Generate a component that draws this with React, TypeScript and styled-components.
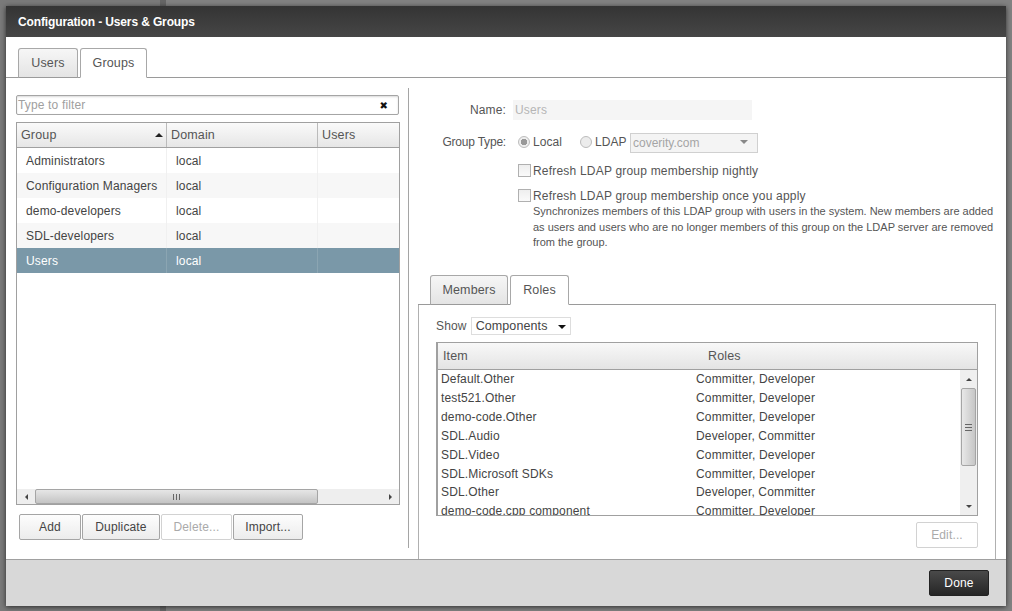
import React from "react";
import styled, { createGlobalStyle, css } from "styled-components";

const Global = createGlobalStyle`
  html, body { margin: 0; padding: 0; height: 100%; overflow: hidden; }
  body {
    font-family: "Liberation Sans", Arial, sans-serif;
    font-size: 12px;
    letter-spacing: 0.15px;
    color: #444;
    background: linear-gradient(90deg, #7a7a7a 0 160px, #666 160px 166px, #828282 166px);
  }
  #root { height: 100%; }
`;

const Stage = styled.div`
  width: 1012px;
  height: 611px;
  padding: 6px;
  box-sizing: border-box;
`;
const Dialog = styled.div`
  width: 1000px;
  height: 600px;
  display: flex;
  flex-direction: column;
  background: #fff;
  box-shadow: 0 1px 5px rgba(0, 0, 0, 0.65);
`;
const Header = styled.div`
  height: 31px;
  flex: none;
  display: flex;
  align-items: center;
  padding-left: 12px;
  background: linear-gradient(#343434, #464646);
  color: #fff;
  font-weight: bold;
  font-size: 12px;
  letter-spacing: -0.13px;
`;
const TabBar = styled.div<{ $pad: number }>`
  display: flex;
  align-items: flex-end;
  gap: 2px;
  height: 30px;
  flex: none;
  padding-left: ${(p) => p.$pad}px;
  border-bottom: 1px solid #9a9a9a;
  box-sizing: border-box;
`;
const Tab = styled.div<{ $active?: boolean; $w: number }>`
  width: ${(p) => p.$w}px;
  height: 30px;
  box-sizing: border-box;
  display: flex;
  align-items: center;
  justify-content: center;
  font-size: 12.5px;
  color: #555;
  border: 1px solid #a8a8a8;
  border-radius: 3px 3px 0 0;
  margin-bottom: -1px;
  background: ${(p) => (p.$active ? "#fff" : "linear-gradient(#f6f6f6, #e4e4e4)")};
  border-bottom: ${(p) => (p.$active ? "1px solid #fff" : "1px solid #9a9a9a")};
`;
const TopTabs = styled.div`
  padding-top: 11px;
  flex: none;
`;
const Body = styled.div`
  flex: 1;
  min-height: 0;
  display: flex;
  padding-top: 10px;
`;
const LeftPanel = styled.div`
  width: 403px;
  height: 460px;
  flex: none;
  box-sizing: border-box;
  border-right: 1px solid #a5a5a5;
  padding: 7px 0 0 10px;
`;
const Filter = styled.div`
  width: 383px;
  height: 20px;
  box-sizing: border-box;
  border: 1px solid #a5a5a5;
  border-radius: 2px;
  box-shadow: inset 0 1px 2px rgba(0, 0, 0, 0.15);
  display: flex;
  align-items: center;
  justify-content: space-between;
  padding: 0 10px 0 1px;
  color: #a0a0a0;
`;
const ClearX = styled.span`
  color: #111;
  font-size: 10px;
  font-weight: bold;
  font-family: "DejaVu Sans", sans-serif;
`;
const GroupTable = styled.div`
  width: 384px;
  height: 383px;
  margin-top: 7px;
  box-sizing: border-box;
  border: 1px solid #a0a0a0;
  display: flex;
  flex-direction: column;
`;
const groupCols = css`
  display: grid;
  grid-template-columns: 150px 151px 1fr;
`;
const GroupHead = styled.div`
  ${groupCols}
  height: 25px;
  flex: none;
  box-sizing: border-box;
  background: linear-gradient(#fafafa, #e6e6e6);
  border-bottom: 1px solid #a0a0a0;
`;
const HeadCell = styled.div`
  display: flex;
  align-items: center;
  justify-content: space-between;
  padding: 0 4px;
  font-size: 12.5px;
  color: #555;
  border-right: 1px solid #bbb;
  &:last-child { border-right: 0; }
`;
const SortUp = styled.span`
  width: 0;
  height: 0;
  border-left: 4px solid transparent;
  border-right: 4px solid transparent;
  border-bottom: 4px solid #222;
  margin-right: -1px;
`;
const GroupRows = styled.div`
  flex: 1;
  min-height: 0;
`;
const GroupRow = styled.div<{ $alt?: boolean; $sel?: boolean }>`
  ${groupCols}
  height: 25px;
  background: ${(p) => (p.$sel ? "#7a98a8" : p.$alt ? "#f7f7f7" : "#fff")};
  color: ${(p) => (p.$sel ? "#fff" : "#444")};
`;
const GroupCell = styled.div<{ $sel?: boolean }>`
  display: flex;
  align-items: center;
  padding-left: 9px;
  border-right: 1px solid ${(p) => (p.$sel ? "#8ba5b2" : "#f0f0f0")};
  &:last-child { border-right: 0; }
`;
const HScroll = styled.div`
  height: 15px;
  flex: none;
  display: flex;
  align-items: center;
  background: #eee;
`;
const ArrowBox = styled.div`
  width: 18px;
  height: 15px;
  flex: none;
  display: flex;
  align-items: center;
  justify-content: center;
`;
const Tri = styled.span<{ $dir: "l" | "r" | "u" | "d" }>`
  width: 0;
  height: 0;
  ${(p) =>
    p.$dir === "l"
      ? "border-top:3.5px solid transparent;border-bottom:3.5px solid transparent;border-right:3px solid #444;"
      : p.$dir === "r"
      ? "border-top:3.5px solid transparent;border-bottom:3.5px solid transparent;border-left:3px solid #444;"
      : p.$dir === "u"
      ? "border-left:3.5px solid transparent;border-right:3.5px solid transparent;border-bottom:3px solid #444;"
      : "border-left:3.5px solid transparent;border-right:3.5px solid transparent;border-top:3px solid #444;"}
`;
const HThumb = styled.div`
  width: 283px;
  height: 15px;
  box-sizing: border-box;
  border: 1px solid #a5a5a5;
  border-radius: 2px;
  background: linear-gradient(#e6e6e6, #c4c4c4);
  display: flex;
  align-items: center;
  justify-content: center;
`;
const GripH = styled.span`
  width: 7px;
  height: 6px;
  background: repeating-linear-gradient(90deg, #666 0 1px, transparent 1px 3px);
`;
const ButtonRow = styled.div`
  display: flex;
  gap: 1px;
  margin: 9px 0 0 3px;
`;
const Btn = styled.div<{ $w: number; $disabled?: boolean }>`
  width: ${(p) => p.$w}px;
  height: 26px;
  box-sizing: border-box;
  display: flex;
  align-items: center;
  justify-content: center;
  border: 1px solid ${(p) => (p.$disabled ? "#d2d2d2" : "#a5a5a5")};
  border-radius: 2px;
  background: ${(p) => (p.$disabled ? "#fff" : "linear-gradient(#fdfdfd, #ececec)")};
  color: ${(p) => (p.$disabled ? "#aaa" : "#444")};
`;
const RightPanel = styled.div`
  flex: 1;
  min-width: 0;
  display: flex;
  flex-direction: column;
`;
const Form = styled.div`
  height: 187px;
  flex: none;
  padding-top: 12px;
  box-sizing: border-box;
`;
const FormRow = styled.div<{ $h: number; $top?: number }>`
  display: flex;
  align-items: center;
  height: ${(p) => p.$h}px;
  margin-top: ${(p) => p.$top ?? 0}px;
`;
const Label = styled.div<{ $lift?: number; $track?: number }>`
  width: 97px;
  flex: none;
  text-align: right;
  margin-right: 7px;
  margin-bottom: ${(p) => p.$lift ?? 0}px;
  letter-spacing: ${(p) => p.$track ?? 0.15}px;
  color: #555;
  white-space: nowrap;
`;
const NameInput = styled.div`
  width: 239px;
  height: 20px;
  background: #f5f5f5;
  color: #b5b5b5;
  padding-left: 2px;
  box-sizing: border-box;
  line-height: 20px;
`;
const Radio = styled.span<{ $on?: boolean; $left: number }>`
  width: 12px;
  height: 12px;
  box-sizing: border-box;
  border-radius: 50%;
  border: 1px solid #bcbcbc;
  background: ${(p) => (p.$on ? "radial-gradient(circle, #999 0 3px, #eee 3.5px)" : "#ececec")};
  margin: 0 3px 2px ${(p) => p.$left}px;
  flex: none;
`;
const RadioText = styled.span<{ $w: number }>`
  width: ${(p) => p.$w}px;
  color: #555;
  flex: none;
  margin-bottom: 2px;
  letter-spacing: 0.05px;
`;
const LdapSelect = styled.div`
  width: 128px;
  height: 20px;
  box-sizing: border-box;
  background: #f4f4f4;
  border: 1px solid #d0d0d0;
  color: #a5a5a5;
  display: flex;
  align-items: center;
  justify-content: space-between;
  padding: 0 9px 0 2px;
  letter-spacing: 0;
`;
const GrayCaret = styled.span`
  width: 0;
  height: 0;
  border-left: 4px solid transparent;
  border-right: 4px solid transparent;
  border-top: 4px solid #888;
  margin-bottom: 3px;
`;
const CheckRow = styled.div<{ $top?: number }>`
  display: flex;
  align-items: center;
  height: 25px;
  margin-top: ${(p) => p.$top ?? 0}px;
  padding-left: 109px;
  color: #555;
  letter-spacing: 0.2px;
`;
const Check = styled.span`
  width: 13px;
  height: 13px;
  box-sizing: border-box;
  border: 1px solid #b0b0b0;
  background: linear-gradient(#eee, #fafafa);
  margin-right: 2px;
  flex: none;
`;
const Help = styled.div`
  margin: -4px 0 0 124px;
  width: 463px;
  font-size: 11px;
  letter-spacing: 0;
  line-height: 15.5px;
  color: #555;
`;
const SubTabs = styled.div`
  flex: none;
  width: 578px;
  margin-left: 9px;
`;
const SubPanel = styled.div`
  width: 578px;
  margin-left: 9px;
  box-sizing: border-box;
  flex: 1;
  min-height: 0;
  border-left: 1px solid #b0b0b0;
  border-right: 1px solid #b0b0b0;
  padding: 12px 0 0 17px;
`;
const ShowRow = styled.div`
  display: flex;
  align-items: center;
  gap: 4px;
  height: 18px;
  color: #555;
`;
const ShowSelect = styled.div`
  width: 100px;
  height: 18px;
  box-sizing: border-box;
  border: 1px solid #ddd;
  display: flex;
  align-items: center;
  justify-content: space-between;
  padding: 0 4px;
  font-size: 12.5px;
  letter-spacing: 0.1px;
  color: #444;
`;
const BlackCaret = styled.span`
  width: 0;
  height: 0;
  border-left: 4px solid transparent;
  border-right: 4px solid transparent;
  border-top: 4px solid #111;
  margin-top: 2px;
`;
const RolesTable = styled.div`
  width: 542px;
  height: 174px;
  margin-top: 7px;
  box-sizing: border-box;
  border: 1px solid #a0a0a0;
  border-left-width: 2px;
  display: flex;
  flex-direction: column;
  overflow: hidden;
`;
const RolesHead = styled.div`
  height: 27px;
  flex: none;
  box-sizing: border-box;
  display: grid;
  grid-template-columns: 265px 1fr;
  align-items: center;
  padding-left: 5px;
  background: linear-gradient(#f8f8f8, #e4e4e4);
  border-bottom: 1px solid #a0a0a0;
  color: #555;
  font-size: 12.5px;
`;
const RolesBody = styled.div`
  flex: 1;
  min-height: 0;
  display: flex;
`;
const RolesList = styled.div`
  flex: 1;
  min-width: 0;
  overflow: hidden;
`;
const RoleRow = styled.div`
  display: grid;
  grid-template-columns: 255px 1fr;
  height: 18.85px;
  align-items: center;
  padding-left: 3px;
  color: #444;
`;
const VScroll = styled.div`
  width: 17px;
  flex: none;
  background: #efefef;
  display: flex;
  flex-direction: column;
  align-items: center;
`;
const VArrow = styled.div`
  width: 16px;
  height: 18px;
  flex: none;
  display: flex;
  align-items: center;
  justify-content: center;
`;
const VThumb = styled.div`
  width: 15px;
  height: 78px;
  flex: none;
  box-sizing: border-box;
  border: 1px solid #a5a5a5;
  border-radius: 2px;
  background: linear-gradient(90deg, #e8e8e8, #c6c6c6);
  display: flex;
  align-items: center;
  justify-content: center;
`;
const GripV = styled.span`
  width: 7px;
  height: 7px;
  background: repeating-linear-gradient(180deg, #666 0 1px, transparent 1px 3px);
`;
const Spacer = styled.div`
  flex: 1;
`;
const EditRow = styled.div`
  width: 542px;
  display: flex;
  justify-content: flex-end;
  margin-top: 6px;
`;
const Footer = styled.div`
  height: 47px;
  flex: none;
  box-sizing: border-box;
  background: #d8d8d8;
  border-top: 1px solid #a0a0a0;
  display: flex;
  align-items: flex-start;
  justify-content: flex-end;
  padding: 10px 17px 0 0;
`;
const Done = styled.div`
  width: 60px;
  height: 26px;
  box-sizing: border-box;
  border: 1px solid #222;
  border-radius: 2px;
  background: linear-gradient(#4a4a4a, #262626);
  color: #fff;
  display: flex;
  align-items: center;
  justify-content: center;
`;

const groups = [
  "Administrators",
  "Configuration Managers",
  "demo-developers",
  "SDL-developers",
  "Users",
];
const roles = [
  ["Default.Other", "Committer, Developer"],
  ["test521.Other", "Committer, Developer"],
  ["demo-code.Other", "Committer, Developer"],
  ["SDL.Audio", "Developer, Committer"],
  ["SDL.Video", "Committer, Developer"],
  ["SDL.Microsoft SDKs", "Committer, Developer"],
  ["SDL.Other", "Developer, Committer"],
  ["demo-code.cpp component", "Committer, Developer"],
];

export default function App() {
  return (
    <Stage>
      <Global />
      <Dialog>
        <Header>Configuration - Users &amp; Groups</Header>
        <TopTabs>
          <TabBar $pad={12}>
            <Tab $w={60}>Users</Tab>
            <Tab $w={67} $active>Groups</Tab>
          </TabBar>
        </TopTabs>
        <Body>
          <LeftPanel>
            <Filter>
              Type to filter
              <ClearX>✖</ClearX>
            </Filter>
            <GroupTable>
              <GroupHead>
                <HeadCell>Group<SortUp /></HeadCell>
                <HeadCell>Domain</HeadCell>
                <HeadCell>Users</HeadCell>
              </GroupHead>
              <GroupRows>
                {groups.map((g, i) => (
                  <GroupRow key={g} $alt={i % 2 === 1} $sel={g === "Users"}>
                    <GroupCell $sel={g === "Users"}>{g}</GroupCell>
                    <GroupCell $sel={g === "Users"}>local</GroupCell>
                    <GroupCell $sel={g === "Users"} />
                  </GroupRow>
                ))}
              </GroupRows>
              <HScroll>
                <ArrowBox><Tri $dir="l" /></ArrowBox>
                <HThumb><GripH /></HThumb>
                <Spacer />
                <ArrowBox><Tri $dir="r" /></ArrowBox>
              </HScroll>
            </GroupTable>
            <ButtonRow>
              <Btn $w={62}>Add</Btn>
              <Btn $w={78}>Duplicate</Btn>
              <Btn $w={71} $disabled>Delete...</Btn>
              <Btn $w={70}>Import...</Btn>
            </ButtonRow>
          </LeftPanel>
          <RightPanel>
            <Form>
              <FormRow $h={20}>
                <Label>Name:</Label>
                <NameInput>Users</NameInput>
              </FormRow>
              <FormRow $h={20} $top={13}>
                <Label $lift={3} $track={-0.2}>Group Type:</Label>
                <Radio $on $left={5} />
                <RadioText $w={47}>Local</RadioText>
                <Radio $left={0} />
                <RadioText $w={35}>LDAP</RadioText>
                <LdapSelect>coverity.com<GrayCaret /></LdapSelect>
              </FormRow>
              <CheckRow $top={5}>
                <Check />Refresh LDAP group membership nightly
              </CheckRow>
              <CheckRow>
                <Check />Refresh LDAP group membership once you apply
              </CheckRow>
              <Help>
                Synchronizes members of this LDAP group with users in the system. New members are added as users and users who are no longer members of this group on the LDAP server are removed from the group.
              </Help>
            </Form>
            <SubTabs>
              <TabBar $pad={12}>
                <Tab $w={78}>Members</Tab>
                <Tab $w={59} $active>Roles</Tab>
              </TabBar>
            </SubTabs>
            <SubPanel>
              <ShowRow>
                Show
                <ShowSelect>Components<BlackCaret /></ShowSelect>
              </ShowRow>
              <RolesTable>
                <RolesHead>
                  <span>Item</span>
                  <span>Roles</span>
                </RolesHead>
                <RolesBody>
                  <RolesList>
                    {roles.map(([a, b]) => (
                      <RoleRow key={a}>
                        <span>{a}</span>
                        <span>{b}</span>
                      </RoleRow>
                    ))}
                  </RolesList>
                  <VScroll>
                    <VArrow><Tri $dir="u" /></VArrow>
                    <VThumb><GripV /></VThumb>
                    <Spacer />
                    <VArrow><Tri $dir="d" /></VArrow>
                  </VScroll>
                </RolesBody>
              </RolesTable>
              <EditRow>
                <Btn $w={62} $disabled>Edit...</Btn>
              </EditRow>
            </SubPanel>
          </RightPanel>
        </Body>
        <Footer>
          <Done>Done</Done>
        </Footer>
      </Dialog>
    </Stage>
  );
}
